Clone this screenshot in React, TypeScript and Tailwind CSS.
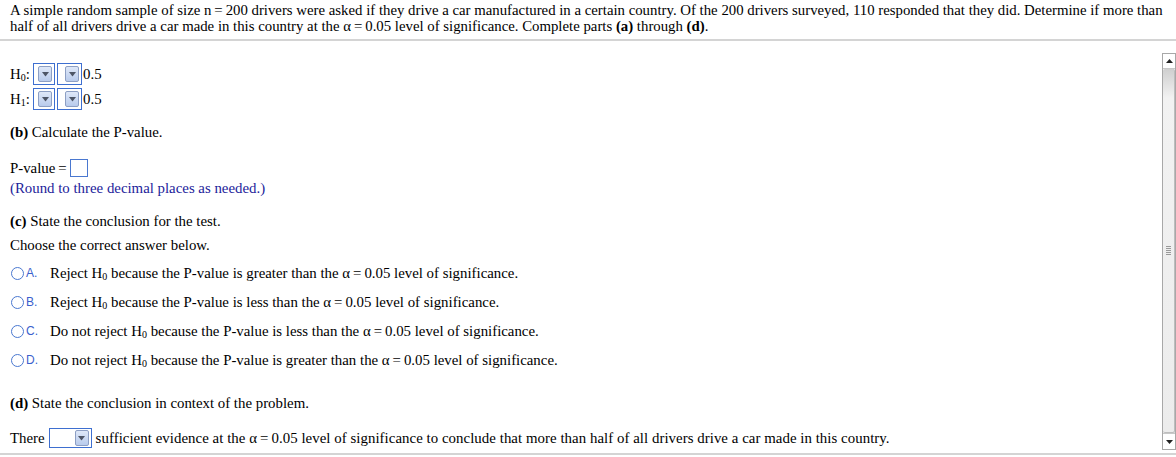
import React from 'react';

const serif = { fontFamily: '"Liberation Serif", "Times New Roman", serif' };

function DropButton() {
  return (
    <span className="flex h-[16px] w-[14px] items-center justify-center rounded-[2px] border border-[#8d9fc4] bg-gradient-to-b from-[#dfe8f8] to-[#b9cbec]">
      <svg width="7" height="5" viewBox="0 0 7 5">
        <path d="M0 0 L7 0 L3.5 4.5 Z" fill="#4d5566" />
      </svg>
    </span>
  );
}

function Dropdown({ width, height = 22 }: { width: number; height?: number }) {
  return (
    <span
      className="inline-flex items-center justify-end border border-[#3e6fd0] bg-white pr-[2px]"
      style={{ width, height }}
    >
      <DropButton />
    </span>
  );
}

function Sub({ n }: { n: string }) {
  return <sub className="relative top-[2px] text-[10px] leading-none">{n}</sub>;
}

function Option({ letter, children }: { letter: string; children: React.ReactNode }) {
  return (
    <div className="flex h-[18px] items-center">
      <span className="ml-[1px] h-[13px] w-[13px] rounded-full border border-[#4a78d0] bg-white" />
      <span
        className="ml-[2px] w-[24px] text-[12px] text-[#3a5fcd]"
        style={{ fontFamily: '"Liberation Sans", Arial, sans-serif' }}
      >
        {letter}.
      </span>
      <span>{children}</span>
    </div>
  );
}

function Scrollbar() {
  return (
    <aside className="mt-[12px] flex h-[397px] w-[14px] flex-col border border-[#a8a8a8] bg-[#f4f4f4]">
      <div className="flex h-[15px] items-center justify-center border-b border-[#c8c8c8] bg-white">
        <svg width="7" height="4" viewBox="0 0 7 4">
          <path d="M0 4 L7 4 L3.5 0 Z" fill="#222" />
        </svg>
      </div>
      <div className="flex flex-1 flex-col">
        <div className="flex flex-1 flex-col items-center justify-center rounded-[2px] border-r border-b border-[#bdbdbd] bg-gradient-to-b from-[#cfcfcf] via-[#f2f2f2] via-[8%] to-[#ececec]">
          <div className="flex flex-col gap-[1px]">
            <span className="h-[1px] w-[5px] bg-[#9a9a9a]" />
            <span className="h-[1px] w-[5px] bg-[#9a9a9a]" />
            <span className="h-[1px] w-[5px] bg-[#9a9a9a]" />
            <span className="h-[1px] w-[5px] bg-[#9a9a9a]" />
            <span className="h-[1px] w-[5px] bg-[#9a9a9a]" />
          </div>
        </div>
      </div>
      <div className="flex h-[16px] items-center justify-center border-t border-[#c8c8c8] bg-white">
        <svg width="7" height="4" viewBox="0 0 7 4">
          <path d="M0 0 L7 0 L3.5 4 Z" fill="#222" />
        </svg>
      </div>
    </aside>
  );
}

export default function App() {
  return (
    <div className="h-[457px] w-[1176px] overflow-hidden bg-white text-[14.85px] text-black" style={serif}>
      {/* question stem */}
      <div className="border-b-2 border-[#d4d4d4] pl-[10px] pt-[2px] pb-[5px] text-[14.8px] leading-[16px]">
        {
          'A simple random sample of size n\u2009=\u2009200 drivers were asked if they drive a car manufactured in a certain country. Of the 200 drivers surveyed, 110 responded that they did. Determine if more than half of all drivers drive a car made in this country at the \u03b1\u2009=\u20090.05 level of significance. Complete parts '
        }
        <b>(a)</b> through <b>(d)</b>.
      </div>

      <div className="flex h-[414px] border-b-2 border-[#d4d4d4]">
        <main className="flex-1 pl-[10px] leading-[18px]">
          <div className="mt-[22px] flex flex-col gap-[3px]">
            <div className="flex h-[22px] items-center">
              <span className="w-[23px]">
                H<Sub n="0" />:
              </span>
              <Dropdown width={22} />
              <span className="w-[2px]" />
              <Dropdown width={25} />
              <span className="ml-[1px]">0.5</span>
            </div>
            <div className="flex h-[22px] items-center">
              <span className="w-[23px]">
                H<Sub n="1" />:
              </span>
              <Dropdown width={22} />
              <span className="w-[2px]" />
              <Dropdown width={25} />
              <span className="ml-[1px]">0.5</span>
            </div>
          </div>

          <p className="mt-[13px]">
            <b>(b)</b> Calculate the P-value.
          </p>

          <div className="mt-[18px] flex h-[18px] items-center">
            <span>{'P-value\u2009=\u2009'}</span>
            <span className="h-[18px] w-[18px] border border-[#4a78d0] bg-white" />
          </div>
          <p className="mt-[2px] text-[#22229a]">(Round to three decimal places as needed.)</p>

          <p className="mt-[15px]">
            <b>(c)</b> State the conclusion for the test.
          </p>
          <p className="mt-[6px]">Choose the correct answer below.</p>

          <div className="mt-[10px] flex flex-col gap-[11px]">
            <Option letter="A">
              Reject H<Sub n="0" />
              {' because the P-value is greater than the \u03b1\u2009=\u20090.05 level of significance.'}
            </Option>
            <Option letter="B">
              Reject H<Sub n="0" />
              {' because the P-value is less than the \u03b1\u2009=\u20090.05 level of significance.'}
            </Option>
            <Option letter="C">
              Do not reject H<Sub n="0" />
              {' because the P-value is less than the \u03b1\u2009=\u20090.05 level of significance.'}
            </Option>
            <Option letter="D">
              Do not reject H<Sub n="0" />
              {' because the P-value is greater than the \u03b1\u2009=\u20090.05 level of significance.'}
            </Option>
          </div>

          <p className="mt-[25px]">
            <b>(d)</b> State the conclusion in context of the problem.
          </p>

          <div className="mt-[16px] flex h-[20px] items-center">
            <span className="mr-[4px]">There</span>
            <Dropdown width={43} height={20} />
            <span className="ml-[4px] tracking-[0.05px]">
              {
                'sufficient evidence at the \u03b1\u2009=\u20090.05 level of significance to conclude that more than half of all drivers drive a car made in this country.'
              }
            </span>
          </div>
        </main>
        <Scrollbar />
      </div>
    </div>
  );
}
